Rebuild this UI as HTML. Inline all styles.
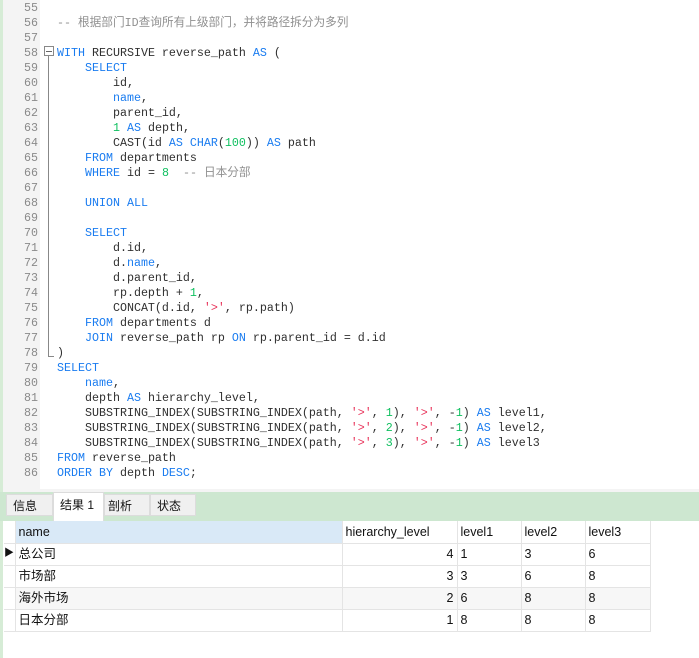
<!DOCTYPE html>
<html><head><meta charset="utf-8"><style>
body{margin:0;width:699px;height:658px;overflow:hidden;background:#fff;position:relative;font-family:"Liberation Sans","Noto Sans CJK SC",sans-serif}
#ed{position:absolute;left:0;top:0;width:699px;height:489px;background:#fff}
#gbar{position:absolute;left:0;top:0;width:3px;height:658px;background:#d6ecd6}
#gut{position:absolute;left:3px;top:0;width:37px;height:489px;background:#f4f4f4}
.ln{position:absolute;left:3px;width:35px;text-align:right;font:11.67px/15px "Liberation Mono",monospace;color:#8a8a8a}
.cd{position:absolute;left:57px;top:1px;white-space:pre;font:11.67px/15px "Liberation Mono","Noto Sans CJK SC",monospace;color:#303030}
.k{color:#1a7cf0}.n{color:#10c060}.s{color:#e8335a}.c{color:#909090}
#fold{position:absolute;left:44px;top:46px;width:8px;height:8px;border:1px solid #888;background:#fff}
#fold:after{content:"";position:absolute;left:1px;top:3.5px;width:6px;height:1px;background:#666}
#vl{position:absolute;left:48px;top:56px;width:1px;height:300px;background:#888}
#vl2{position:absolute;left:48px;top:356px;width:6px;height:1px;background:#888}
#tabs{position:absolute;left:0;top:492px;width:699px;height:29px;background:#cde7d0}
.tab{position:absolute;top:2px;height:22px;background:#f0f0f0;border:1px solid #dcdcdc;font-size:12px;line-height:22px;padding-left:6px;box-sizing:border-box;color:#111}
table{position:absolute;left:4px;top:521px;border-collapse:collapse;font-size:12.5px;color:#111}
td{height:22px;line-height:20px;border-right:1px solid #e4e4e4;border-bottom:1px solid #e4e4e4;padding:0 3px;box-sizing:border-box;overflow:hidden}
tr{height:22px}
</style></head><body>
<div id="ed"></div><div id="gut"></div><div id="gbar"></div>
<div class="ln" style="top:1px">55</div><div class="ln" style="top:16px">56</div><div class="ln" style="top:31px">57</div><div class="ln" style="top:46px">58</div><div class="ln" style="top:61px">59</div><div class="ln" style="top:76px">60</div><div class="ln" style="top:91px">61</div><div class="ln" style="top:106px">62</div><div class="ln" style="top:121px">63</div><div class="ln" style="top:136px">64</div><div class="ln" style="top:151px">65</div><div class="ln" style="top:166px">66</div><div class="ln" style="top:181px">67</div><div class="ln" style="top:196px">68</div><div class="ln" style="top:211px">69</div><div class="ln" style="top:226px">70</div><div class="ln" style="top:241px">71</div><div class="ln" style="top:256px">72</div><div class="ln" style="top:271px">73</div><div class="ln" style="top:286px">74</div><div class="ln" style="top:301px">75</div><div class="ln" style="top:316px">76</div><div class="ln" style="top:331px">77</div><div class="ln" style="top:346px">78</div><div class="ln" style="top:361px">79</div><div class="ln" style="top:376px">80</div><div class="ln" style="top:391px">81</div><div class="ln" style="top:406px">82</div><div class="ln" style="top:421px">83</div><div class="ln" style="top:436px">84</div><div class="ln" style="top:451px">85</div><div class="ln" style="top:466px">86</div>
<div id="fold"></div><div id="vl"></div><div id="vl2"></div>
<div class="cd"> 
<span class="c">-- 根据部门ID查询所有上级部门，并将路径拆分为多列</span>

<span class="k">WITH</span> RECURSIVE reverse_path <span class="k">AS</span> (
    <span class="k">SELECT</span>
        id,
        <span class="k">name</span>,
        parent_id,
        <span class="n">1</span> <span class="k">AS</span> depth,
        CAST(id <span class="k">AS</span> <span class="k">CHAR</span>(<span class="n">100</span>)) <span class="k">AS</span> path
    <span class="k">FROM</span> departments
    <span class="k">WHERE</span> id = <span class="n">8</span>  <span class="c">-- 日本分部</span>

    <span class="k">UNION ALL</span>

    <span class="k">SELECT</span>
        d.id,
        d.<span class="k">name</span>,
        d.parent_id,
        rp.depth + <span class="n">1</span>,
        CONCAT(d.id, <span class="s">'&gt;'</span>, rp.path)
    <span class="k">FROM</span> departments d
    <span class="k">JOIN</span> reverse_path rp <span class="k">ON</span> rp.parent_id = d.id
)
<span class="k">SELECT</span>
    <span class="k">name</span>,
    depth <span class="k">AS</span> hierarchy_level,
    SUBSTRING_INDEX(SUBSTRING_INDEX(path, <span class="s">'&gt;'</span>, <span class="n">1</span>), <span class="s">'&gt;'</span>, -<span class="n">1</span>) <span class="k">AS</span> level1,
    SUBSTRING_INDEX(SUBSTRING_INDEX(path, <span class="s">'&gt;'</span>, <span class="n">2</span>), <span class="s">'&gt;'</span>, -<span class="n">1</span>) <span class="k">AS</span> level2,
    SUBSTRING_INDEX(SUBSTRING_INDEX(path, <span class="s">'&gt;'</span>, <span class="n">3</span>), <span class="s">'&gt;'</span>, -<span class="n">1</span>) <span class="k">AS</span> level3
<span class="k">FROM</span> reverse_path
<span class="k">ORDER BY</span> depth <span class="k">DESC</span>;</div>
<div style="position:absolute;left:3px;top:489px;width:696px;height:3px;background:#f4f4f4"></div>
<div id="tabs">
<div class="tab" style="left:6px;width:47px">信息</div>
<div class="tab" style="left:53px;width:51px;top:0;height:29px;background:#fff;border-bottom:none;line-height:24px">结果 1</div>
<div class="tab" style="left:104px;width:46px;padding-left:3px">剖析</div>
<div class="tab" style="left:150px;width:46px">状态</div>
</div>
<table>
<tr><td style="width:11px;background:#fff"></td><td style="width:327px;background:#d9e9f7">name</td><td style="width:115px">hierarchy_level</td><td style="width:64px">level1</td><td style="width:64px">level2</td><td style="width:65px">level3</td></tr>
<tr><td style="padding:0;font-size:10px">&#9654;</td><td>总公司</td><td style="text-align:right">4</td><td>1</td><td>3</td><td>6</td></tr>
<tr><td></td><td>市场部</td><td style="text-align:right">3</td><td>3</td><td>6</td><td>8</td></tr>
<tr style="background:#f7f7f7"><td style="background:#fff"></td><td>海外市场</td><td style="text-align:right">2</td><td>6</td><td>8</td><td>8</td></tr>
<tr><td></td><td>日本分部</td><td style="text-align:right">1</td><td>8</td><td>8</td><td>8</td></tr>
</table>
</body></html>
